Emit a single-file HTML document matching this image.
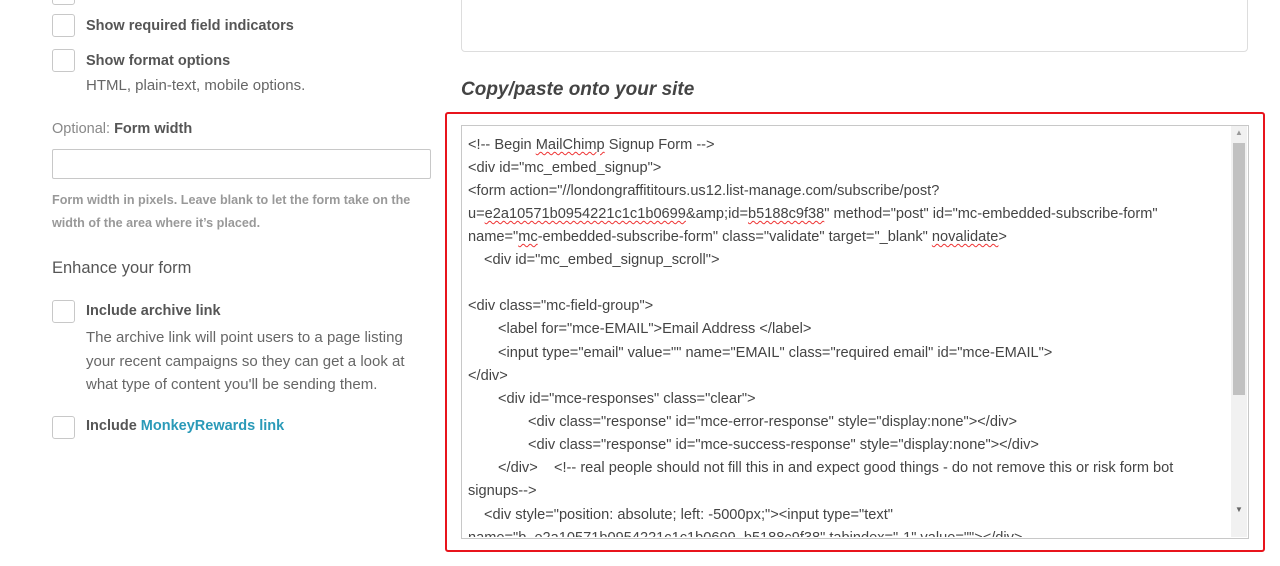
<!DOCTYPE html>
<html><head><meta charset="utf-8"><style>
body{margin:0;width:1280px;height:566px;overflow:hidden;background:#fff;font-family:"Liberation Sans",sans-serif;color:#555;position:relative}
.a{position:absolute;white-space:nowrap}
.cb{position:absolute;width:21px;height:21px;border:1px solid #c8c8c8;border-radius:3px;background:#fff}
.lb{font-size:14.5px;font-weight:bold;color:#555}
.ds{font-size:15px;color:#666}
.code{position:absolute;left:468px;font-size:14.6px;color:#444;white-space:nowrap;line-height:16px}
.sq{text-decoration:underline wavy #e33;text-decoration-thickness:1px;text-underline-offset:2px}
</style></head><body>
<div class="cb" style="left:52px;top:-18px"></div>
<div class="cb" style="left:52px;top:14px"></div>
<div class="a lb" style="left:86px;top:18px">Show required field indicators</div>
<div class="cb" style="left:52px;top:49px"></div>
<div class="a lb" style="left:86px;top:53px">Show format options</div>
<div class="a ds" style="left:86px;top:77px">HTML, plain-text, mobile options.</div>
<div class="a" style="left:52px;top:121px;font-size:14.5px;color:#888">Optional: <b style="color:#555">Form width</b></div>
<div style="position:absolute;left:52px;top:149px;width:377px;height:28px;border:1px solid #c8c8c8;border-radius:2px"></div>
<div class="a" style="left:52px;top:189px;font-size:12.6px;font-weight:bold;color:#999;line-height:23px">Form width in pixels. Leave blank to let the form take on the<br>width of the area where it’s placed.</div>
<div class="a" style="left:52px;top:259px;font-size:16.5px;color:#555">Enhance your form</div>
<div class="cb" style="left:52px;top:300px"></div>
<div class="a lb" style="left:86px;top:303px">Include archive link</div>
<div class="a ds" style="left:86px;top:326px;line-height:23.5px">The archive link will point users to a page listing<br>your recent campaigns so they can get a look at<br>what type of content you'll be sending them.</div>
<div class="cb" style="left:52px;top:416px"></div>
<div class="a lb" style="left:86px;top:418px">Include <span style="color:#2a9ab8">MonkeyRewards link</span></div>

<div style="position:absolute;left:461px;top:-10px;width:785px;height:60px;border:1px solid #ddd;border-radius:4px"></div>
<div class="a" style="left:461px;top:79px;font-size:19px;font-style:italic;font-weight:bold;color:#444">Copy/paste onto your site</div>
<div style="position:absolute;left:445px;top:112px;width:816px;height:436px;border:2px solid #e8141c;border-radius:3px"></div>
<div style="position:absolute;left:461px;top:125px;width:786px;height:412px;border:1px solid #c8c8c8;overflow:hidden">
</div>
<div style="position:absolute;left:1231px;top:126px;width:16px;height:411px;background:#f1f1f1"></div>
<div style="position:absolute;left:1233px;top:143px;width:12px;height:252px;background:#c1c1c1"></div>
<div class="a" style="left:1235px;top:128px;font-size:8px;color:#999">▲</div>
<div class="a" style="left:1235px;top:505px;font-size:8px;color:#666">▼</div>
<div style="position:absolute;left:462px;top:126px;width:768px;height:411px;overflow:hidden">
<div style="position:relative;left:-462px;top:-126px">
<div class="code" style="top:137px">&lt;!-- Begin <span class="sq">MailChimp</span> Signup Form --&gt;</div>
<div class="code" style="top:160px">&lt;div id="mc_embed_signup"&gt;</div>
<div class="code" style="top:183px">&lt;form action="//londongraffititours.us12.list-manage.com/subscribe/post?</div>
<div class="code" style="top:206px">u=<span class="sq">e2a10571b0954221c1c1b0699</span>&amp;amp;id=<span class="sq">b5188c9f38</span>" method="post" id="mc-embedded-subscribe-form"</div>
<div class="code" style="top:229px">name="<span class="sq">mc</span>-embedded-subscribe-form" class="validate" target="_blank" <span class="sq">novalidate</span>&gt;</div>
<div class="code" style="top:252px;left:484px">&lt;div id="mc_embed_signup_scroll"&gt;</div>
<div class="code" style="top:298px">&lt;div class="mc-field-group"&gt;</div>
<div class="code" style="top:321px;left:498px">&lt;label for="mce-EMAIL"&gt;Email Address &lt;/label&gt;</div>
<div class="code" style="top:345px;left:498px">&lt;input type="email" value="" name="EMAIL" class="required email" id="mce-EMAIL"&gt;</div>
<div class="code" style="top:368px">&lt;/div&gt;</div>
<div class="code" style="top:391px;left:498px">&lt;div id="mce-responses" class="clear"&gt;</div>
<div class="code" style="top:414px;left:528px">&lt;div class="response" id="mce-error-response" style="display:none"&gt;&lt;/div&gt;</div>
<div class="code" style="top:437px;left:528px">&lt;div class="response" id="mce-success-response" style="display:none"&gt;&lt;/div&gt;</div>
<div class="code" style="top:460px;left:498px">&lt;/div&gt;&nbsp;&nbsp;&nbsp;&nbsp;&lt;!-- real people should not fill this in and expect good things - do not remove this or risk form bot</div>
<div class="code" style="top:483px">signups--&gt;</div>
<div class="code" style="top:507px;left:484px">&lt;div style="position: absolute; left: -5000px;"&gt;&lt;input type="text"</div>
<div class="code" style="top:530px">name="b_e2a10571b0954221c1c1b0699_b5188c9f38" tabindex="-1" value=""&gt;&lt;/div&gt;</div>
</div></div>
</body></html>
